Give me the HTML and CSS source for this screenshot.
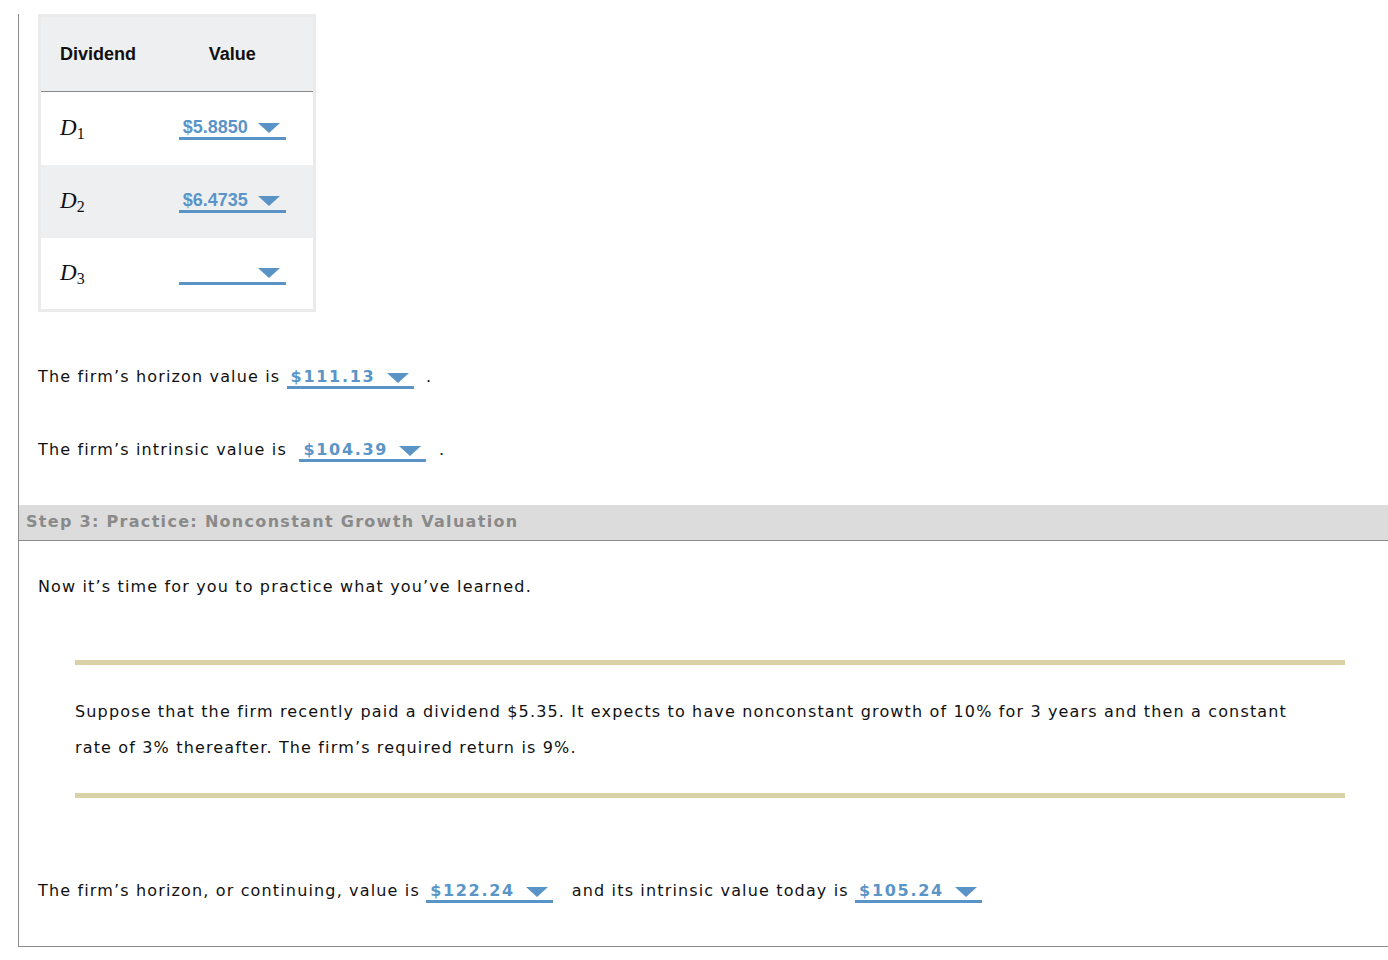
FILE: index.html
```html
<!DOCTYPE html>
<html lang="en">
<head>
    <meta charset="UTF-8">
    <title>Nonconstant Growth Valuation</title>
    <link rel="stylesheet" href="styles.css">
</head>
<body>
    <div class="panel">
        <div class="content">
            <table class="divs">
                <thead>
                    <tr>
                        <th class="col-name">Dividend</th>
                        <th class="col-val">Value</th>
                    </tr>
                </thead>
                <tbody>
                    <tr>
                        <td class="col-name"><span class="math">D<sub>1</sub></span></td>
                        <td class="col-val"><span class="drop small"><span class="drop-val">$5.8850</span><span class="caret"></span></span></td>
                    </tr>
                    <tr class="alt">
                        <td class="col-name"><span class="math">D<sub>2</sub></span></td>
                        <td class="col-val"><span class="drop small"><span class="drop-val">$6.4735</span><span class="caret"></span></span></td>
                    </tr>
                    <tr>
                        <td class="col-name"><span class="math">D<sub>3</sub></span></td>
                        <td class="col-val"><span class="drop small"><span class="drop-val"></span><span class="caret"></span></span></td>
                    </tr>
                </tbody>
            </table>

            <p class="line first">The firm’s horizon value is <span class="drop"><span class="drop-val">$111.13</span><span class="caret"></span></span> &nbsp;.</p>
            <p class="line second">The firm’s intrinsic value is &nbsp;<span class="drop"><span class="drop-val">$104.39</span><span class="caret"></span></span> &nbsp;.</p>
        </div>

        <div class="step-head">Step 3: Practice: Nonconstant Growth Valuation</div>

        <div class="content">
            <p class="line intro">Now it’s time for you to practice what you’ve learned.</p>

            <div class="problem">
                <p>Suppose that the firm recently paid a dividend $5.35. It expects to have nonconstant growth of 10% for 3 years and then a constant rate of 3% thereafter. The firm’s required return is 9%.</p>
            </div>

            <p class="line final">The firm’s horizon, or continuing, value is <span class="drop"><span class="drop-val">$122.24</span><span class="caret"></span></span> &nbsp; and its intrinsic value today is <span class="drop"><span class="drop-val">$105.24</span><span class="caret"></span></span></p>
        </div>
    </div>
</body>
</html>
```

FILE: styles.css
```css
* {
    box-sizing: border-box;
}

body {
    margin: 0;
    font-family: 'DejaVu Sans', Verdana, sans-serif;
    font-size: 16px;
    letter-spacing: 1.15px;
    color: #111;
    background: #fff;
}

.panel {
    margin-left: 18px;
    border-left: 1px solid #8c8c8c;
    border-bottom: 1px solid #8c8c8c;
    padding-bottom: 43px;
}

.content {
    padding: 0 20px 0 19px;
}

/* tabla de dividendos */
.divs {
    margin-top: 14px;
    width: 278px;
    border-collapse: collapse;
    border: 3px solid #ebebec;
    font-family: 'Liberation Sans', Arial, sans-serif;
    letter-spacing: 0;
}

.divs th {
    height: 76px;
    background: #eeeff1;
    font-weight: bold;
    font-size: 18px;
    border-bottom: 1px solid #8a8a8a;
    padding: 0;
}

.divs th.col-name {
    text-align: left;
    padding-left: 19px;
    width: 112px;
}

.divs td {
    height: 73px;
    padding: 0;
    background: #fff;
}

.divs tr.alt td {
    background: #eeeff1;
}

.divs td.col-name {
    padding-left: 19px;
}

.divs .col-val {
    text-align: center;
}

.math {
    font-family: 'Liberation Serif', 'Times New Roman', serif;
    font-style: italic;
    font-size: 23px;
}

.math sub {
    font-style: normal;
    font-size: 16px;
    vertical-align: -4px;
    line-height: 0;
}

/* menus desplegables */
.drop {
    display: inline-block;
    width: 127px;
    border-bottom: 3px solid #5a93c6;
    padding-left: 4px;
    color: #5b95c8;
    font-weight: bold;
    letter-spacing: 1.7px;
    text-align: left;
    line-height: 18px;
    vertical-align: baseline;
}

.drop-val {
    display: inline-block;
    min-width: 1px;
}

.caret {
    float: right;
    margin: 5px 5px 0 0;
    width: 0;
    height: 0;
    border-left: 11px solid transparent;
    border-right: 11px solid transparent;
    border-top: 10px solid #5a93c6;
}

.drop.small {
    width: 107px;
    font-size: 18px;
    letter-spacing: 0;
    line-height: 20px;
    padding-left: 4px;
}

.drop.small .caret {
    margin: 6px 6px 0 0;
}

.line {
    margin: 0;
    line-height: 24px;
}

.line.first {
    margin-top: 53px;
}

.line.second {
    margin-top: 49px;
}

.step-head {
    margin-top: 43px;
    height: 36px;
    background: #dcdcdc;
    border-bottom: 1px solid #8c8c8c;
    padding: 5px 7px 0;
    font-weight: bold;
    color: #8a8a8a;
    font-size: 16px;
    letter-spacing: 1.3px;
    line-height: 24px;
}

.line.intro {
    margin-top: 34px;
}

.problem {
    margin: 61px 23px 0 37px;
    border-top: 5px solid #dad2a7;
    border-bottom: 5px solid #dad2a7;
    padding: 29px 0 27px;
}

.problem p {
    margin: 0;
    padding-right: 30px;
    line-height: 36px;
}

.line.final {
    margin-top: 81px;
}
```
